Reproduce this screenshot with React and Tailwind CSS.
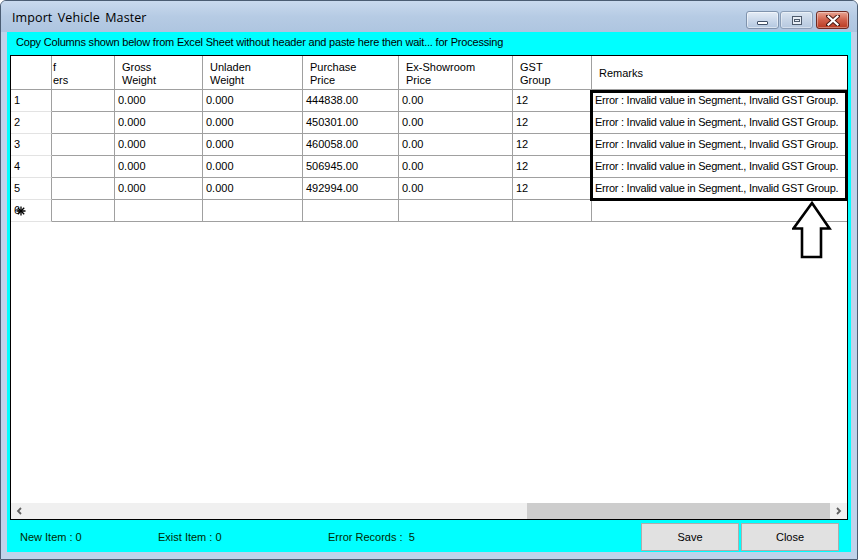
import React from "react";

const cols = [
  { w: 41, h: [""] },
  { w: 63, h: ["f", "ers"] },
  { w: 88, h: ["Gross", "Weight"] },
  { w: 100, h: ["Unladen", "Weight"] },
  { w: 96, h: ["Purchase", "Price"] },
  { w: 114, h: ["Ex-Showroom", "Price"] },
  { w: 79, h: ["GST", "Group"] },
  { w: 255, h: ["Remarks"] },
];

const rows = [
  ["1", "", "0.000", "0.000", "444838.00", "0.00", "12", "Error : Invalid value in Segment., Invalid GST Group."],
  ["2", "", "0.000", "0.000", "450301.00", "0.00", "12", "Error : Invalid value in Segment., Invalid GST Group."],
  ["3", "", "0.000", "0.000", "460058.00", "0.00", "12", "Error : Invalid value in Segment., Invalid GST Group."],
  ["4", "", "0.000", "0.000", "506945.00", "0.00", "12", "Error : Invalid value in Segment., Invalid GST Group."],
  ["5", "", "0.000", "0.000", "492994.00", "0.00", "12", "Error : Invalid value in Segment., Invalid GST Group."],
];

const font = { fontFamily: '"Liberation Sans", Arial, sans-serif' };

function HeaderRow() {
  return (
    <div className="flex h-[34px] border-b border-[#a0a0a0] bg-white">
      {cols.map((c, i) => (
        <div
          key={i}
          style={{ width: c.w }}
          className={`shrink-0 overflow-hidden ${i < cols.length - 1 ? "border-r border-[#a0a0a0]" : ""} flex flex-col justify-center pt-[2px] ${i === 1 ? "pl-[1px]" : "pl-[7px]"} leading-[13px] text-[11px] text-black`}
        >
          {c.h.map((t, j) => (
            <span key={j} className="whitespace-nowrap">{t}</span>
          ))}
        </div>
      ))}
    </div>
  );
}

function DataRow({ r }) {
  return (
    <div className="flex h-[22px] bg-white">
      {cols.map((c, i) => (
        <div
          key={i}
          style={{ width: c.w }}
          className={`shrink-0 overflow-hidden whitespace-nowrap flex items-center text-[11px] text-black border-b ${i === 0 ? "border-[#e3e3e3] border-r border-r-[#a0a0a0] pl-[3px]" : "border-[#a0a0a0] pl-[3px]"} ${i > 0 && i < cols.length - 1 ? "border-r border-r-[#a0a0a0]" : ""} ${i === cols.length - 1 ? "pl-[3px] tracking-[-0.25px]" : ""}`}
        >
          {r[i]}
        </div>
      ))}
    </div>
  );
}

function NewRow() {
  return (
    <div className="flex h-[22px] bg-white">
      {cols.map((c, i) => (
        <div
          key={i}
          style={{ width: c.w }}
          className={`relative shrink-0 border-b border-[#a0a0a0] ${i < cols.length - 1 ? "border-r" : ""} ${i === 0 ? "border-b-[#e3e3e3] border-r-[#a0a0a0]" : ""}`}
        >
          {i === 0 && (
            <>
              <span className="absolute left-[3px] top-[4px] text-[11px] leading-[13px] text-black">6</span>
              <svg className="absolute left-[5px] top-[6px]" width="10" height="10" viewBox="0 0 10 10">
                <g stroke="#000" strokeWidth="1.3">
                  <line x1="5" y1="0.5" x2="5" y2="9.5" />
                  <line x1="0.5" y1="5" x2="9.5" y2="5" />
                  <line x1="1.8" y1="1.8" x2="8.2" y2="8.2" />
                  <line x1="8.2" y1="1.8" x2="1.8" y2="8.2" />
                </g>
              </svg>
            </>
          )}
        </div>
      ))}
    </div>
  );
}

function TitleButtons() {
  return (
    <div className="flex items-start gap-[1px] pt-[10px] pr-[8px]">
      <div className="w-[33px] h-[18px] rounded-[3px] border border-[#7f93ad] bg-gradient-to-b from-[#e4ecf6] via-[#cbd9eb] to-[#b3c7e0] flex items-center justify-center shadow-[inset_0_0_0_1px_rgba(255,255,255,0.5)]">
        <div className="w-[11px] h-[4px] mt-[5px] bg-white border border-[#3f4f66] rounded-[1px]" />
      </div>
      <div className="w-[33px] h-[18px] mr-[2px] rounded-[3px] border border-[#8b9eb7] bg-gradient-to-b from-[#dbe5f1] via-[#c7d5e7] to-[#b6c8df] flex items-center justify-center shadow-[inset_0_0_0_1px_rgba(255,255,255,0.4)]">
        <div className="w-[10px] h-[9px] border border-[#4d5a6c] bg-[#e8eef6] flex items-center justify-center">
          <div className="w-[6px] h-[3px] border border-[#4d5a6c]" />
        </div>
      </div>
      <div className="w-[33px] h-[18px] rounded-[3px] border border-[#6e2a22] bg-gradient-to-b from-[#e8a493] via-[#d0604a] to-[#b9391f] flex items-center justify-center shadow-[inset_0_0_0_1px_rgba(255,255,255,0.35)]">
        <svg width="14" height="11" viewBox="0 0 14 11">
          <path d="M2 1 L12 10 M12 1 L2 10" stroke="#4a1a14" strokeWidth="4" strokeLinecap="square" />
          <path d="M2.5 1.5 L11.5 9.5 M11.5 1.5 L2.5 9.5" stroke="#ffffff" strokeWidth="2.2" strokeLinecap="square" />
        </svg>
      </div>
    </div>
  );
}

export default function App() {
  return (
    <div className="w-[858px] h-[560px] overflow-hidden bg-[#bfd3ea] border border-[#4b5d73] rounded-t-[6px] flex flex-col" style={font}>
      {/* Title bar */}
      <div className="h-[31px] shrink-0 flex justify-between bg-gradient-to-b from-[#c9daee] via-[#b6cbe4] to-[#aec5e0]">
        <div className="pl-[11px] pt-[8px] text-[12.5px] text-black tracking-[0.1px]" style={{ fontFamily: '"Open Sans", "Noto Sans", sans-serif', wordSpacing: "2px" }}>
          Import Vehicle Master
        </div>
        <TitleButtons />
      </div>

      {/* Client */}
      <div className="mx-[6px] h-[520px] bg-[#00ffff] flex flex-col px-[3px]">
        <div className="h-[23px] pl-[6px] pt-[4px] text-[11px] leading-[13px] text-black whitespace-nowrap tracking-[-0.2px]">
          Copy Columns shown below from Excel Sheet without header and paste here then wait... for Processing
        </div>

        {/* Grid */}
        <div className="relative h-[465px] border border-black bg-white flex flex-col">
          <HeaderRow />
          {rows.map((r, i) => (
            <DataRow key={i} r={r} />
          ))}
          <NewRow />
          <div className="flex-1" />
          {/* scrollbar */}
          <div className="h-[16px] flex bg-[#f0f0f0]">
            <div className="w-[17px] flex items-center justify-center">
              <svg width="7" height="8" viewBox="0 0 7 8"><path d="M5 1 L2 4 L5 7" stroke="#606060" strokeWidth="1.8" fill="none" /></svg>
            </div>
            <div className="w-[499px]" />
            <div className="w-[303px] bg-[#cdcdcd]" />
            <div className="w-[17px] flex items-center justify-center">
              <svg width="7" height="8" viewBox="0 0 7 8"><path d="M2 1 L5 4 L2 7" stroke="#606060" strokeWidth="1.8" fill="none" /></svg>
            </div>
          </div>

          {/* highlight */}
          <div className="absolute left-[579px] top-[34px] w-[258px] h-[111px] border-[3px] border-black" />

          {/* arrow */}
          <svg className="absolute left-[781px] top-[145px]" width="40" height="58" viewBox="0 0 40 58">
            <path d="M20 2 L37.5 27.5 L29 27.5 L29 56 L10 56 L10 27.5 L1.5 27.5 Z" fill="#fff" stroke="#000" strokeWidth="2.6" strokeLinejoin="miter" />
          </svg>
        </div>

        {/* Footer */}
        <div className="flex-1 flex items-center pt-[2px] text-[11px] text-[#002a00]">
          <span className="ml-[10px] w-[138px] whitespace-pre">New Item : 0</span>
          <span className="w-[170px] whitespace-pre">Exist Item : 0</span>
          <span className="whitespace-pre">Error Records :  5</span>
          <div className="ml-auto flex gap-[2px] mr-[9px]">
            <button className="w-[98px] h-[28px] bg-[#e1e1e1] border border-[#adadad] text-[11px] text-black">Save</button>
            <button className="w-[98px] h-[28px] bg-[#e1e1e1] border border-[#adadad] text-[11px] text-black">Close</button>
          </div>
        </div>
      </div>
      <div className="flex-1" />
    </div>
  );
}
